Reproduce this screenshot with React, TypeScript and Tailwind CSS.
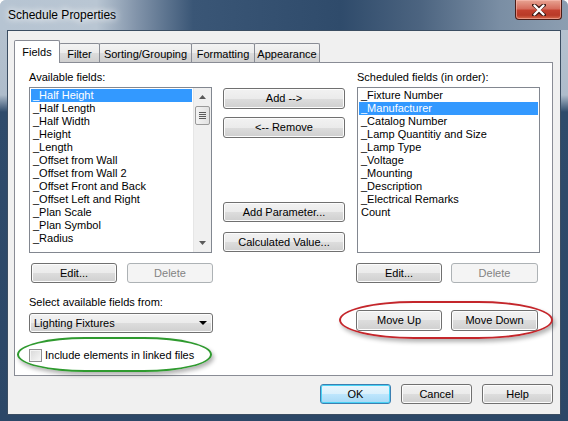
import React from "react";

const BTN =
  "flex items-center justify-center rounded-[3px] border border-[#707070] bg-[linear-gradient(180deg,#f2f2f2_0%,#ebebeb_50%,#dddddd_50%,#cfcfcf_100%)] shadow-[inset_0_0_0_1px_#fcfcfc]";
const BTN_OFF =
  "flex items-center justify-center rounded-[3px] border border-[#adb2b5] bg-[#f4f4f4] text-[#838383]";
const BTN_DEFAULT =
  "flex items-center justify-center rounded-[3px] border border-[#3c7fb1] bg-[linear-gradient(180deg,#eaf6fd_0%,#d9f0fc_50%,#bee6fd_50%,#a7d9f5_100%)] shadow-[inset_0_0_0_1px_#48d2f5]";

const available = [
  "_Half Height",
  "_Half Length",
  "_Half Width",
  "_Height",
  "_Length",
  "_Offset from Wall",
  "_Offset from Wall 2",
  "_Offset Front and Back",
  "_Offset Left and Right",
  "_Plan Scale",
  "_Plan Symbol",
  "_Radius",
];

const scheduled = [
  "_Fixture Number",
  "_Manufacturer",
  "_Catalog Number",
  "_Lamp Quantitiy and Size",
  "_Lamp Type",
  "_Voltage",
  "_Mounting",
  "_Description",
  "_Electrical Remarks",
  "Count",
];

const tabs = [
  { label: "Fields", w: "w-[46px]" },
  { label: "Filter", w: "w-[41px]" },
  { label: "Sorting/Grouping", w: "w-[93px]" },
  { label: "Formatting", w: "w-[64px]" },
  { label: "Appearance", w: "w-[66px]" },
];

const ListRows = ({ items, selected }: { items: string[]; selected: number }) => (
  <div className="flex flex-col p-px">
    {items.map((it, i) => (
      <div
        key={it}
        className={
          i === selected
            ? "h-[13px] leading-[13px] pl-[2px] bg-[#3399ff] text-white whitespace-nowrap"
            : "h-[13px] leading-[13px] pl-[2px] whitespace-nowrap"
        }
      >
        {it}
      </div>
    ))}
  </div>
);

const ScrollBar = () => (
  <div className="w-[18px] h-full flex flex-col items-center border-l border-[#e6e6e6] bg-[#f0f0f0]">
    <div className="h-[18px] flex items-center justify-center">
      <svg width="7" height="4" viewBox="0 0 7 4">
        <path d="M0 4 L3.5 0 L7 4 Z" fill="#5a5a5a" />
      </svg>
    </div>
    <div className="w-[15px] h-[19px] rounded-[2px] border border-[#9a9a9a] bg-[linear-gradient(90deg,#f3f3f3,#e2e2e2)] flex flex-col items-center justify-center gap-[1px]">
      <div className="w-[7px] h-px bg-[#5b5b5b]" />
      <div className="w-[7px] h-px bg-[#5b5b5b]" />
      <div className="w-[7px] h-px bg-[#5b5b5b]" />
      <div className="w-[7px] h-px bg-[#5b5b5b]" />
    </div>
    <div className="flex-1" />
    <div className="h-[18px] flex items-center justify-center">
      <svg width="7" height="4" viewBox="0 0 7 4">
        <path d="M0 0 L7 0 L3.5 4 Z" fill="#5a5a5a" />
      </svg>
    </div>
  </div>
);

export default function App() {
  return (
    <div className="relative w-[568px] h-[421px] overflow-hidden flex flex-col rounded-t-[6px] font-['Liberation_Sans',Arial,sans-serif] text-[11px] text-black bg-[linear-gradient(180deg,#b8c4d0_0px,#aebccb_95px,#2f4b6b_112px,#2c4767_100%)]">
      {/* title bar */}
      <div className="h-[30px] flex items-start justify-between bg-[linear-gradient(90deg,#b6c4d2_0%,#b9c6d3_17%,#8294aa_24%,#3a5676_34%,#2f4b6b_60%,#4c6480_74%,#7a8ea4_88%,#8c9eb1_100%)]">
        <div className="ml-[8px] mt-[8px] text-[12px] leading-[15px] [text-shadow:0_0_6px_#ffffff,0_0_10px_#ffffff]">
          Schedule Properties
        </div>
        <div className="mr-[6px] w-[47px] h-[20px] rounded-b-[4px] border border-t-0 border-[#4a1c16] bg-[linear-gradient(180deg,#e8a493_0%,#d66e5e_45%,#c3412f_55%,#b93a27_80%,#d66c4e_100%)] shadow-[inset_0_0_0_1px_rgba(255,200,190,0.5)] flex items-center justify-center">
          <svg width="14" height="12" viewBox="0 0 14 12">
            <path
              d="M2 1 L7 5 L12 1 M2 11 L7 7 L12 11 M7 5 L7 7"
              stroke="#3a1812"
              strokeWidth="4"
              strokeLinecap="round"
              fill="none"
            />
            <path
              d="M2.5 1.5 L11.5 10.5 M11.5 1.5 L2.5 10.5"
              stroke="#ffffff"
              strokeWidth="2.4"
              strokeLinecap="round"
            />
          </svg>
        </div>
      </div>

      {/* client area */}
      <div className="mx-[7px] mb-[6px] flex-1 flex flex-col bg-[#f0f0f0] border border-[#3b4d62]">
        {/* tabs */}
        <div className="relative z-10 -mb-px ml-[6px] mt-[9px] h-[23px] flex items-end">
          {tabs.map((t, i) =>
            i === 0 ? (
              <div
                key={t.label}
                className={`${t.w} h-[23px] bg-white border border-b-0 border-[#898c95] rounded-t-[2px] flex justify-center pt-[4px] leading-[14px]`}
              >
                {t.label}
              </div>
            ) : (
              <div
                key={t.label}
                className={`${t.w} mb-px -ml-px h-[19px] border border-b-0 border-[#898c95] rounded-t-[2px] bg-[linear-gradient(180deg,#f3f3f3_0%,#ebebeb_50%,#dddddd_50%,#cfcfcf_100%)] flex justify-center pt-[3px] leading-[14px]`}
              >
                {t.label}
              </div>
            )
          )}
        </div>

        {/* tab panel */}
        <div className="ml-[6px] w-[539px] h-[314px] bg-white border border-[#898c95] flex pl-[14px] pt-[7px]">
          {/* left column */}
          <div className="w-[184px] flex flex-col">
            <div className="leading-[14px]">Available fields:</div>
            <div className="mt-[3px] w-[183px] h-[166px] border border-[#828790] bg-white flex">
              <div className="flex-1">
                <ListRows items={available} selected={0} />
              </div>
              <ScrollBar />
            </div>
            <div className="mt-[10px] ml-[2px] flex gap-[10px]">
              <div className={`${BTN} w-[86px] h-[20px]`}>Edit...</div>
              <div className={`${BTN_OFF} w-[86px] h-[20px]`}>Delete</div>
            </div>
            <div className="mt-[12px] leading-[14px]">Select available fields from:</div>
            <div className={`${BTN} mt-[4px] w-[184px] h-[20px] !justify-between pl-[4px] pr-[5px]`}>
              <span>Lighting Fixtures</span>
              <svg width="8" height="4" viewBox="0 0 8 4">
                <path d="M0 0 L8 0 L4 4 Z" fill="#000000" />
              </svg>
            </div>
            <div className="mt-[15px] flex items-center gap-[3px]">
              <div className="w-[13px] h-[13px] border border-[#8f8f8f] bg-[linear-gradient(135deg,#d8d8d8,#f7f7f7)] shadow-[inset_0_0_0_1px_#f4f4f4]" />
              <span className="leading-[14px]">Include elements in linked files</span>
            </div>
          </div>

          {/* middle column */}
          <div className="ml-[10px] w-[122px] flex flex-col pt-[18px]">
            <div className={`${BTN} h-[21px]`}>Add --&gt;</div>
            <div className={`${BTN} mt-[8px] h-[21px]`}>&lt;-- Remove</div>
            <div className={`${BTN} mt-[64px] h-[20px]`}>Add Parameter...</div>
            <div className={`${BTN} mt-[10px] h-[20px]`}>Calculated Value...</div>
          </div>

          {/* right column */}
          <div className="ml-[12px] w-[183px] flex flex-col">
            <div className="leading-[14px]">Scheduled fields (in order):</div>
            <div className="mt-[3px] w-[183px] h-[166px] border border-[#828790] bg-white">
              <ListRows items={scheduled} selected={1} />
            </div>
            <div className="mt-[10px] -ml-px flex gap-[9px]">
              <div className={`${BTN} w-[86px] h-[20px]`}>Edit...</div>
              <div className={`${BTN_OFF} w-[87px] h-[20px]`}>Delete</div>
            </div>
            <div className="mt-[27px] -ml-px flex gap-[9px]">
              <div className={`${BTN} w-[86px] h-[21px]`}>Move Up</div>
              <div className={`${BTN} w-[87px] h-[21px]`}>Move Down</div>
            </div>
          </div>
        </div>

        {/* dialog buttons */}
        <div className="mt-[8px] mr-[7px] flex justify-end gap-[10px]">
          <div className={`${BTN_DEFAULT} w-[71px] h-[20px]`}>OK</div>
          <div className={`${BTN} w-[71px] h-[20px]`}>Cancel</div>
          <div className={`${BTN} w-[71px] h-[20px]`}>Help</div>
        </div>
      </div>

      {/* annotation ellipses */}
      <div className="absolute left-[17px] top-[337px] w-[195px] h-[35px] rounded-[70px/18px] border-2 border-[#2f9a2f] shadow-[2px_3px_4px_rgba(0,0,0,0.3)]" />
      <div className="absolute left-[339px] top-[301px] w-[214px] h-[38px] rounded-[75px/19px] border-2 border-[#c4262b] shadow-[2px_3px_4px_rgba(0,0,0,0.3)]" />
    </div>
  );
}
